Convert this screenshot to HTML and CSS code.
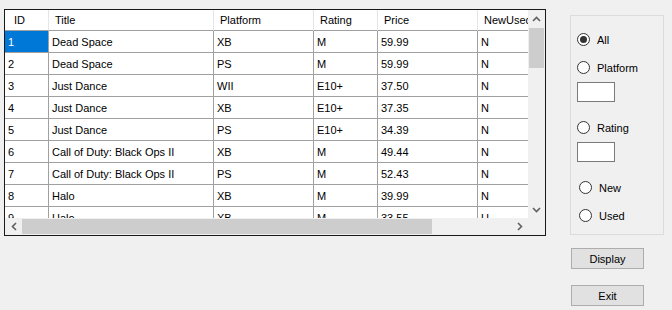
FILE: index.html
```html
<!DOCTYPE html>
<html lang="en">

<head>
    <meta charset="UTF-8">
    <title>Games</title>
    <link rel="stylesheet" href="styles.css">
</head>

<body>
    <div id="form">
        <div class="grid-box">
            <div class="viewport">
                <table class="games">
                    <colgroup>
                        <col class="c-id">
                        <col class="c-title">
                        <col class="c-plat">
                        <col class="c-rate">
                        <col class="c-price">
                        <col class="c-new">
                    </colgroup>
                    <thead>
                        <tr>
                            <th class="h-id">ID</th>
                            <th>Title</th>
                            <th>Platform</th>
                            <th>Rating</th>
                            <th>Price</th>
                            <th>NewUsed</th>
                        </tr>
                    </thead>
                    <tbody>
                        <tr><td class="selected">1</td><td>Dead Space</td><td>XB</td><td>M</td><td>59.99</td><td>N</td></tr>
                        <tr><td>2</td><td>Dead Space</td><td>PS</td><td>M</td><td>59.99</td><td>N</td></tr>
                        <tr><td>3</td><td>Just Dance</td><td>WII</td><td>E10+</td><td>37.50</td><td>N</td></tr>
                        <tr><td>4</td><td>Just Dance</td><td>XB</td><td>E10+</td><td>37.35</td><td>N</td></tr>
                        <tr><td>5</td><td>Just Dance</td><td>PS</td><td>E10+</td><td>34.39</td><td>N</td></tr>
                        <tr><td>6</td><td>Call of Duty: Black Ops II</td><td>XB</td><td>M</td><td>49.44</td><td>N</td></tr>
                        <tr><td>7</td><td>Call of Duty: Black Ops II</td><td>PS</td><td>M</td><td>52.43</td><td>N</td></tr>
                        <tr><td>8</td><td>Halo</td><td>XB</td><td>M</td><td>39.99</td><td>N</td></tr>
                        <tr><td>9</td><td>Halo</td><td>XB</td><td>M</td><td>33.55</td><td>U</td></tr>
                    </tbody>
                </table>
            </div>

            <!-- vertical scrollbar -->
            <div class="vscroll">
                <div class="arrow">
                    <svg width="9" height="6" viewBox="0 0 9 6"><path d="M1 5 L4.5 1.5 L8 5" fill="none" stroke="#606060" stroke-width="1.6"/></svg>
                </div>
                <div class="track"><div class="vthumb"></div></div>
                <div class="arrow">
                    <svg width="9" height="6" viewBox="0 0 9 6"><path d="M1 1 L4.5 4.5 L8 1" fill="none" stroke="#606060" stroke-width="1.6"/></svg>
                </div>
            </div>

            <!-- horizontal scrollbar -->
            <div class="hscroll">
                <div class="arrow">
                    <svg width="6" height="9" viewBox="0 0 6 9"><path d="M5 1 L1.5 4.5 L5 8" fill="none" stroke="#606060" stroke-width="1.6"/></svg>
                </div>
                <div class="track"><div class="hthumb"></div></div>
                <div class="arrow">
                    <svg width="6" height="9" viewBox="0 0 6 9"><path d="M1 1 L4.5 4.5 L1 8" fill="none" stroke="#606060" stroke-width="1.6"/></svg>
                </div>
            </div>

            <div class="corner"></div>
        </div>

        <div class="side">
            <div class="group">
                <label class="opt opt-all"><span class="radio checked"></span>All</label>
                <label class="opt opt-plat"><span class="radio"></span>Platform</label>
                <div class="textbox"></div>
                <label class="opt opt-rate"><span class="radio"></span>Rating</label>
                <div class="textbox"></div>
                <label class="opt opt-new"><span class="radio"></span>New</label>
                <label class="opt opt-used"><span class="radio"></span>Used</label>
            </div>

            <button class="btn btn-display">Display</button>
            <button class="btn btn-exit">Exit</button>
        </div>
    </div>
</body>

</html>
```

FILE: styles.css
```css
body {
    margin: 0;
    background: #f0f0f0;
    font-family: "Liberation Sans", Arial, sans-serif;
    font-size: 11px;
    color: #000;
}

#form {
    display: flex;
    align-items: flex-start;
    width: 672px;
    height: 310px;
}

/* data grid */

.grid-box {
    box-sizing: border-box;
    width: 542px;
    height: 227px;
    margin: 9px 0 0 4px;
    border: 1px solid #1a1a1a;
    display: grid;
    grid-template-columns: 523px 17px;
    grid-template-rows: 208px 17px;
    background: #fff;
}

.viewport {
    overflow: hidden;
    background: #fff;
}

.games {
    table-layout: fixed;
    border-collapse: separate;
    border-spacing: 0;
    width: 573px;
}

.c-id { width: 44px; }
.c-title { width: 165px; }
.c-plat { width: 100px; }
.c-rate { width: 64px; }
.c-price { width: 100px; }
.c-new { width: 100px; }

.games th,
.games td {
    box-sizing: border-box;
    padding: 0 0 0 3px;
    text-align: left;
    font-weight: normal;
    white-space: nowrap;
    overflow: hidden;
    border-right: 1px solid #a0a0a0;
    border-bottom: 1px solid #a0a0a0;
}

.games th {
    height: 21px;
    padding-left: 6px;
    border-right-color: #e5e5e5;
}

.games th.h-id {
    padding-left: 9px;
}

.games td {
    height: 22px;
}

.games td.selected {
    background: #0078d7;
    color: #fff;
}

/* scrollbars */

.vscroll,
.hscroll {
    display: flex;
    background: #f0f0f0;
}

.vscroll {
    flex-direction: column;
}

.arrow {
    width: 17px;
    height: 17px;
    display: flex;
    align-items: center;
    justify-content: center;
    flex-shrink: 0;
}

.track {
    flex: 1;
    display: flex;
}

.vscroll .track {
    flex-direction: column;
    padding: 1px 1px 0;
}

.vthumb {
    height: 40px;
    background: #cdcdcd;
}

.hscroll .track {
    padding: 1px 0 1px 0;
}

.hthumb {
    width: 410px;
    background: #cdcdcd;
}

.corner {
    background: #f0f0f0;
}

/* right side */

.side {
    display: flex;
    flex-direction: column;
    margin: 15px 0 0 24px;
}

.group {
    box-sizing: border-box;
    width: 94px;
    height: 220px;
    border: 1px solid #dcdcdc;
    display: flex;
    flex-direction: column;
    align-items: flex-start;
}

.opt {
    display: flex;
    align-items: center;
    gap: 7px;
    height: 13px;
    margin-left: 6px;
}

.radio {
    box-sizing: border-box;
    width: 13px;
    height: 13px;
    border: 1px solid #333;
    border-radius: 50%;
    background: #fff;
    display: flex;
    align-items: center;
    justify-content: center;
}

.radio.checked::after {
    content: "";
    width: 7px;
    height: 7px;
    border-radius: 50%;
    background: #333;
}

.opt-all { margin-top: 17px; }
.opt-plat { margin-top: 15px; }
.opt-rate { margin-top: 19px; }
.opt-new { margin-top: 19px; margin-left: 8px; }
.opt-used { margin-top: 15px; margin-left: 8px; }

.textbox {
    box-sizing: border-box;
    width: 38px;
    height: 20px;
    margin: 8px 0 0 6px;
    background: #fff;
    border: 1px solid #7a7a7a;
}

.btn {
    box-sizing: border-box;
    width: 73px;
    height: 21px;
    margin-left: 1px;
    padding: 0;
    background: #e1e1e1;
    border: 1px solid #adadad;
    font-family: "Liberation Sans", Arial, sans-serif;
    font-size: 11px;
    color: #000;
}

.btn-display { margin-top: 13px; }
.btn-exit { margin-top: 16px; }
```
